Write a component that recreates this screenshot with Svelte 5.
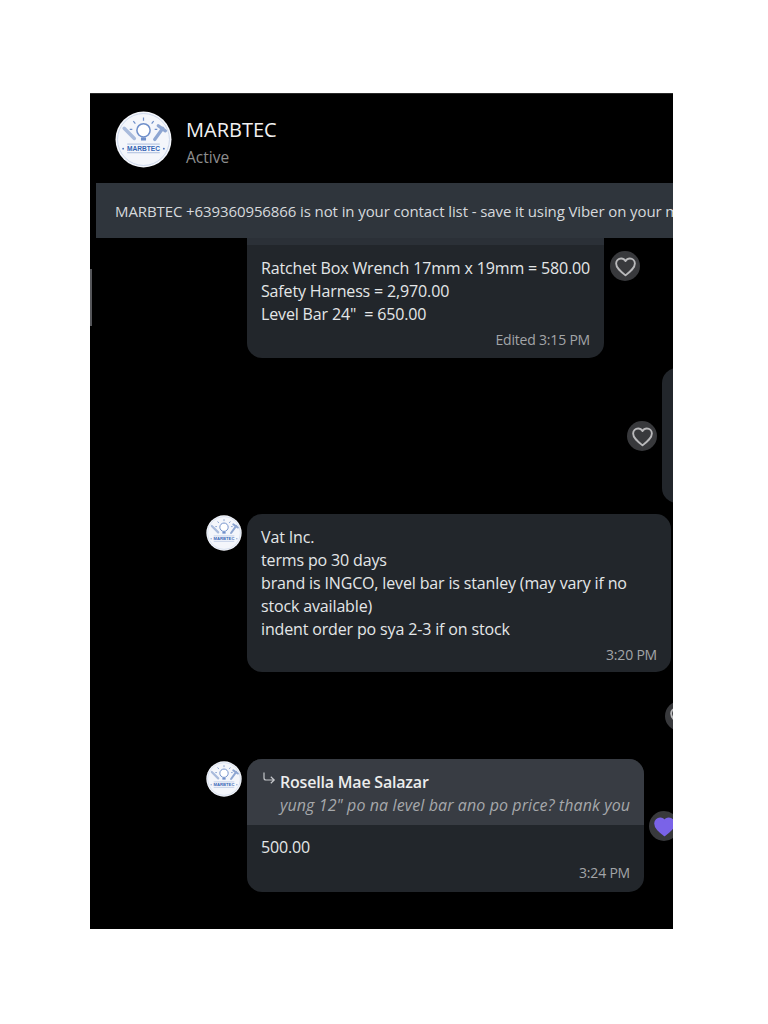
<script>
  const heart = "M12 20.5C7.5 17 3 13.6 3 9.2 3 6.3 5.2 4.3 7.8 4.3c1.8 0 3.3.9 4.2 2.5.9-1.6 2.4-2.5 4.2-2.5 2.6 0 4.8 2 4.8 4.9 0 4.4-4.5 7.8-9 11.3z";
</script>

{#snippet logo(size)}
  <svg class="logo" width={size} height={size} viewBox="0 0 56 56" aria-hidden="true">
    <circle cx="28" cy="28" r="27.5" fill="#f4f6fb" />
    <circle cx="28" cy="28" r="25.5" fill="none" stroke="#c3d0e8" stroke-width="0.8" />
    <path d="M9 17l10 10" stroke="#a9bbdc" stroke-width="3.4" stroke-linecap="round" />
    <path d="M47 17l-8 11M42.5 14.500l7 5" stroke="#8ea6d2" stroke-width="3.200" stroke-linecap="round" />
    <circle cx="28" cy="19" r="6.500" fill="#fff" stroke="#6f8fca" stroke-width="1.500" />
    <path d="M25.500 26h5v3h-5z" fill="#6f8fca" />
    <path d="M28 6.500v3M18 10l2 2.500M38 10l-2 2.500M14.500 18h2.500M39 18h2.500" stroke="#6f8fca" stroke-width="1.200" />
    <path d="M12 32.500h32M12 41h32" stroke="#8ea6d2" stroke-width="0.700" />
    <text x="28" y="39" text-anchor="middle" class="logotext">MARBTEC</text>
    <circle cx="8" cy="37" r="0.900" fill="#4a73bd" />
    <circle cx="48" cy="37" r="0.900" fill="#4a73bd" />
  </svg>
{/snippet}

{#snippet react(filled = false)}
  <span class="react">
    <svg width="25" height="25" viewBox="0 0 24 24" aria-hidden="true">
      <path d={heart} fill={filled ? "#7a63e8" : "none"} stroke={filled ? "#7a63e8" : "#b9b9bb"} stroke-width="1.800" stroke-linejoin="round" />
    </svg>
  </span>
{/snippet}

<main class="window">
  <div class="edge"></div>
  <div class="content">
    <header class="head">
      {@render logo(57)}
      <div class="who">
        <div class="name">MARBTEC</div>
        <div class="status">Active</div>
      </div>
    </header>
    <div class="notice">MARBTEC +639360956866 is not in your contact list - save it using Viber on your mobile device</div>

    <section class="chat">
      <div class="row first">
        <div class="bubble b1">
          <p>Ratchet Box Wrench 17mm x 19mm = 580.00</p>
          <p>Safety Harness = 2,970.00</p>
          <p>Level Bar 24" &nbsp;= 650.00</p>
          <div class="time">Edited 3:15 PM</div>
        </div>
        <div class="side s1">{@render react()}</div>
      </div>

      <div class="row second">
        <div class="side s2">{@render react()}</div>
        <div class="bubble out"></div>
      </div>

      <div class="row third">
        <div class="avatar">{@render logo(36)}</div>
        <div class="bubble b3">
          <p>Vat Inc.</p>
          <p>terms po 30 days</p>
          <p>brand is INGCO, level bar is stanley (may vary if no stock available)</p>
          <p>indent order po sya 2-3 if on stock</p>
          <div class="time">3:20 PM</div>
        </div>
      </div>

      <div class="row lone">{@render react()}</div>

      <div class="row fourth">
        <div class="avatar">{@render logo(36)}</div>
        <div class="bubble b4">
          <div class="quote">
            <div class="qname">
              <svg width="16" height="16" viewBox="0 0 16 16" aria-hidden="true">
                <path d="M3 1.500v5.500c0 1.200.8 2 2 2h8M9.800 5.800L13.200 9l-3.400 3.200" fill="none" stroke="#c4c6ca" stroke-width="1.200" />
              </svg>
              <span>Rosella Mae Salazar</span>
            </div>
            <div class="qtext">yung 12" po na level bar ano po price? thank you</div>
          </div>
          <div class="body">
            <p>500.00</p>
            <div class="time">3:24 PM</div>
          </div>
        </div>
        <div class="side s4">{@render react(true)}</div>
      </div>
    </section>
  </div>
</main>

<style>
  :global(body) {
    margin: 0;
    background: #fff;
  }
  .window {
    display: flex;
    width: 583px;
    height: 836px;
    margin: 93px 0 0 90px;
    background: #000;
    overflow: hidden;
    font-family: "Open Sans", "Noto Sans", sans-serif;
    color: #e4e6e8;
    border-top: 1px solid #2a2a2a;
    box-sizing: border-box;
  }
  .edge {
    width: 6px;
    flex: none;
    background: linear-gradient(#000 0 175px, #55565a 175px 232px, #000 232px);
    background-size: 2px 100%;
    background-repeat: no-repeat;
  }
  .content {
    flex: 1;
    min-width: 0;
    display: flex;
    flex-direction: column;
  }
  .head {
    height: 89px;
    flex: none;
    display: flex;
    align-items: flex-start;
    gap: 14px;
    padding: 17px 0 0 19px;
    box-sizing: border-box;
  }
  .logotext {
    font: 700 6.500px "Liberation Sans", sans-serif;
    fill: #3565b5;
  }
  .who {
    padding-top: 6px;
  }
  .name {
    font-size: 20px;
    line-height: 26px;
    color: #f1f1f1;
  }
  .status {
    font-size: 15.500px;
    line-height: 24px;
    margin-top: 2px;
    color: #8e8e8e;
  }
  .notice {
    height: 55px;
    flex: none;
    background: #2f353c;
    line-height: 57px;
    padding-left: 19px;
    font-size: 15px;
    white-space: nowrap;
    overflow: hidden;
    color: #d6d9dc;
    letter-spacing: -0.1px;
  }
  .chat {
    flex: 1;
    display: flex;
    flex-direction: column;
    align-items: flex-start;
    min-width: 0;
  }
  .row {
    display: flex;
    align-items: flex-start;
    flex: none;
  }
  .first {
    padding-left: 151px;
  }
  .second {
    padding-left: 531px;
    margin-top: 10px;
  }
  .third {
    margin-top: 11px;
    padding-left: 110px;
  }
  .lone {
    margin-top: 29px;
    padding-left: 569px;
  }
  .fourth {
    margin-top: 28px;
    padding-left: 110px;
  }
  .avatar {
    width: 36px;
    height: 36px;
    margin: 1px 5px 0 0;
    flex: none;
  }
  .logo {
    display: block;
    flex: none;
  }
  .fourth .avatar {
    margin-top: 2px;
  }
  .bubble {
    background: #22262b;
    border-radius: 15px;
    box-sizing: border-box;
    font-size: 16px;
    line-height: 23px;
    letter-spacing: -0.15px;
  }
  .bubble p {
    margin: 0;
  }
  .b1 {
    width: 357px;
    height: 120px;
    padding: 19px 14px 0;
    border-radius: 0 0 15px 15px;
    box-shadow: inset 0 7px 0 #2b3037;
    white-space: nowrap;
  }
  .b3 {
    width: 424px;
    height: 158px;
    padding: 12px 14px 0;
  }
  .b4 {
    width: 397px;
    height: 133px;
    overflow: hidden;
  }
  .out {
    width: 40px;
    height: 135px;
    margin-left: 5px;
    flex: none;
  }
  .time {
    text-align: right;
    font-size: 14px;
    line-height: 20px;
    margin-top: 4px;
    color: #a3a5a8;
    letter-spacing: -0.2px;
  }
  .side {
    flex: none;
  }
  .s1 {
    margin: 13px 0 0 6px;
  }
  .s2 {
    margin-top: 53px;
  }
  .s4 {
    margin: 52px 0 0 5px;
  }
  .react {
    width: 30px;
    height: 30px;
    border-radius: 50%;
    background: #38393c;
    display: flex;
    align-items: center;
    justify-content: center;
  }
  .quote {
    height: 66px;
    background: #383c43;
    padding: 12px 14px 0;
    box-sizing: border-box;
  }
  .qname {
    display: flex;
    align-items: flex-start;
    gap: 3px;
    font-weight: 600;
    color: #eceded;
    letter-spacing: -0.2px;
  }
  .qtext {
    font-style: italic;
    padding-left: 19px;
    color: #a6a8ab;
    white-space: nowrap;
    letter-spacing: 0.1px;
  }
  .body {
    padding: 11px 14px 0;
  }
</style>
